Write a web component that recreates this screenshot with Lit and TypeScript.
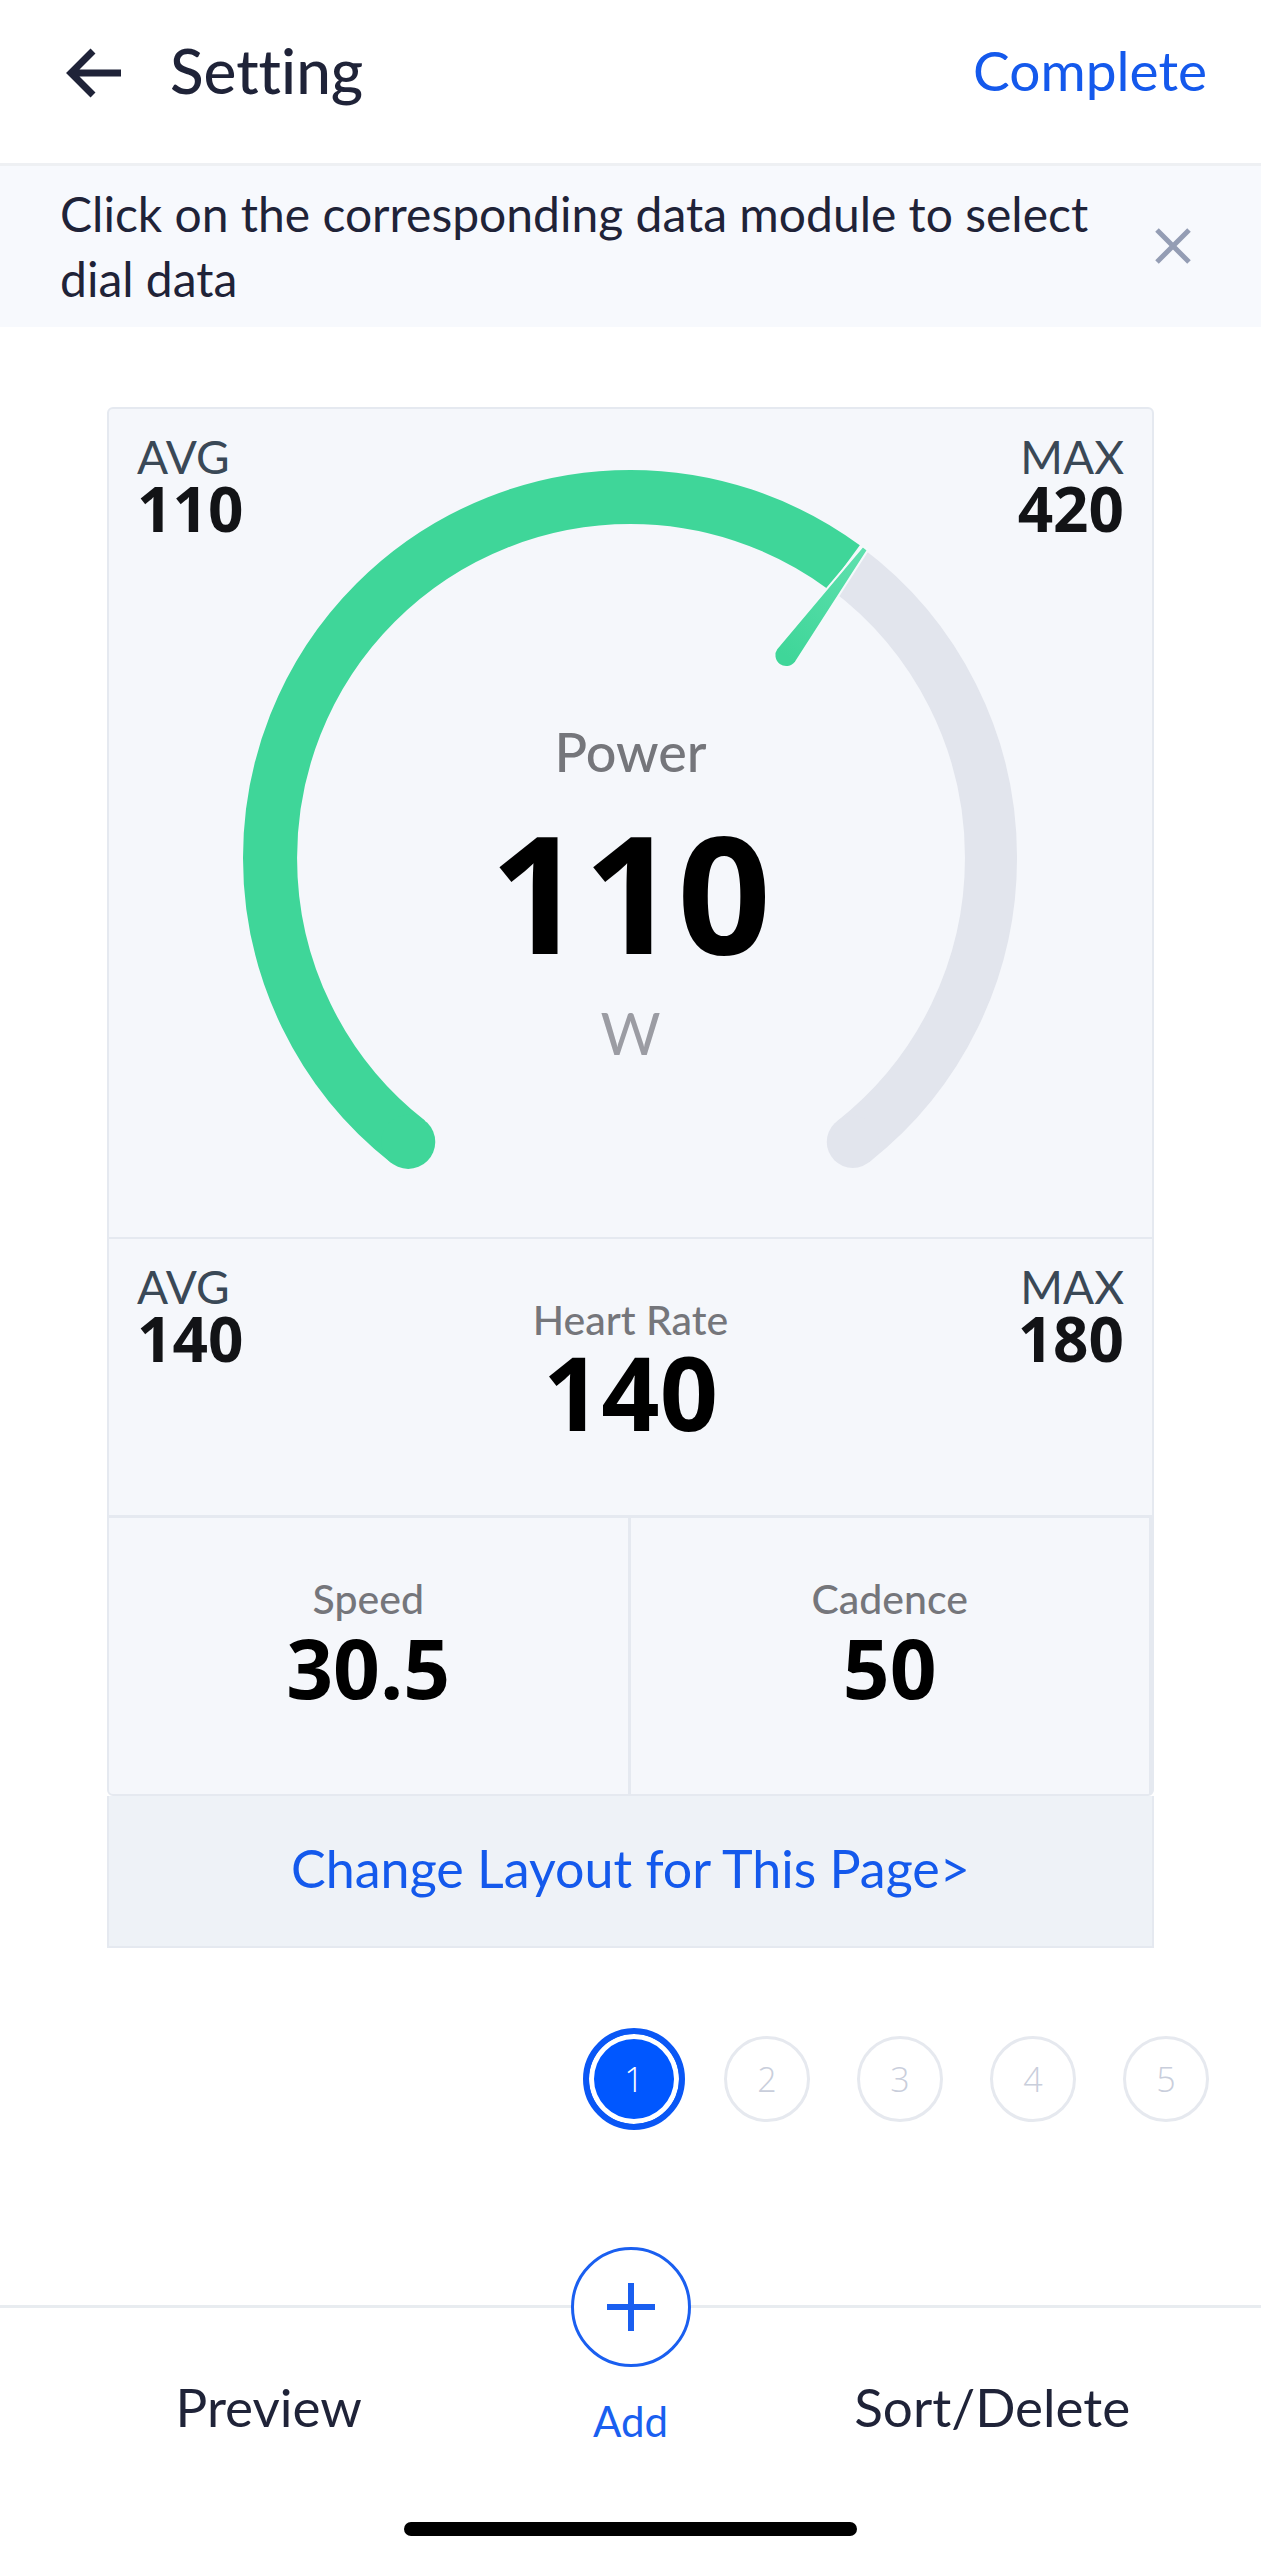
import { LitElement, css, html } from "lit";
import { customElement, property, state } from "lit/decorators.js";
import { classMap } from "lit/directives/class-map.js";

@customElement("corner-stat")
export class CornerStat extends LitElement {
  @property({ type: String })
  label = "";

  @property({ type: String })
  value = "";

  render() {
    return html`
      <span class="label">${this.label}</span>
      <span class="value">${this.value}</span>
    `;
  }

  static styles = css`
    :host {
      display: flex;
      flex-direction: column;
    }

    .label {
      color: #3a4856;
      font-size: 46px;
      line-height: 50px;
    }

    .value {
      color: #121316;
      font-family: "Open Sans", "Noto Sans", sans-serif;
      font-size: 62px;
      font-weight: 700;
      line-height: 52px;
    }
  `;
}

@customElement("dial-gauge")
export class DialGauge extends LitElement {
  render() {
    return html`
      <svg class="dial" viewBox="0 0 776 702" aria-hidden="true">
        <defs>
          <linearGradient
            id="needle"
            gradientUnits="userSpaceOnUse"
            x1="543"
            y1="187"
            x2="622"
            y2="79"
          >
            <stop offset="0" stop-color="#3fd699" />
            <stop offset="1" stop-color="#5fe0ae" />
          </linearGradient>
        </defs>
        <path
          d="M 603 99 A 360 360 0 0 1 748 388 A 360 360 0 0 1 610 672"
          fill="none"
          stroke="#e2e5ed"
          stroke-width="52"
        />
        <circle cx="610" cy="672" r="26" fill="#e2e5ed" />
        <path
          d="M 166 672 A 360 360 0 0 1 28 388 A 360 360 0 0 1 388 28 A 360 360 0 0 1 601 98"
          fill="none"
          stroke="#3fd699"
          stroke-width="54"
        />
        <circle cx="166" cy="672" r="27" fill="#3fd699" />
        <path
          d="M 620 77 L 625 81 L 553 193 A 11 11 0 1 1 534 179 Z"
          fill="url(#needle)"
          stroke="#f5f9fb"
          stroke-width="2"
          stroke-linejoin="round"
        />
      </svg>
    `;
  }

  static styles = css`
    :host {
      display: block;
    }

    .dial {
      display: block;
      width: 100%;
      overflow: visible;
    }
  `;
}

@customElement("app-root")
export class AppRoot extends LitElement {
  @state()
  page = 1;

  @state()
  hintOpen = true;

  pages = [1, 2, 3, 4, 5];

  closeHint() {
    this.hintOpen = false;
  }

  renderHint() {
    return html`
      <div class="hint">
        <p class="hint-text">
          Click on the corresponding data module to select dial data
        </p>
        <button class="close" aria-label="Close" @click=${this.closeHint}>
          <svg class="close-icon" viewBox="0 0 36 36">
            <path
              d="M2 2 L34 34 M34 2 L2 34"
              fill="none"
              stroke="#949db4"
              stroke-width="5"
            />
          </svg>
        </button>
      </div>
    `;
  }

  render() {
    return html`
      <header class="header">
        <button class="back" aria-label="Back">
          <svg class="back-icon" viewBox="0 0 56 64">
            <path
              d="M27 13 L5 35 L27 57 M5 35 H55"
              fill="none"
              stroke="#1f2338"
              stroke-width="7"
            />
          </svg>
        </button>
        <h1 class="title">Setting</h1>
        <button class="complete">Complete</button>
      </header>

      ${this.hintOpen ? this.renderHint() : ""}

      <main class="main">
        <section class="card">
          <button class="module power">
            <dial-gauge class="gauge"></dial-gauge>
            <span class="readout">
              <span class="power-name">Power</span>
              <span class="power-value">110</span>
              <span class="power-unit">W</span>
            </span>
            <corner-stat class="avg" label="AVG" value="110"></corner-stat>
            <corner-stat class="max" label="MAX" value="420"></corner-stat>
          </button>
          <button class="module heart">
            <span class="metric">
              <span class="name">Heart Rate</span>
              <span class="value large">140</span>
            </span>
            <corner-stat class="avg" label="AVG" value="140"></corner-stat>
            <corner-stat class="max" label="MAX" value="180"></corner-stat>
          </button>
          <div class="split">
            <button class="module small">
              <span class="metric">
                <span class="name">Speed</span>
                <span class="value">30.5</span>
              </span>
            </button>
            <button class="module small">
              <span class="metric">
                <span class="name">Cadence</span>
                <span class="value">50</span>
              </span>
            </button>
          </div>
        </section>
        <button class="change">Change Layout for This Page&gt;</button>
      </main>

      <nav class="pager" aria-label="Pages">
        ${this.pages.map(
          (n) => html`
            <button
              class=${classMap({ dot: true, active: n === this.page })}
              @click=${() => (this.page = n)}
            >
              ${n}
            </button>
          `
        )}
      </nav>

      <footer class="footer">
        <button class="action">Preview</button>
        <button class="add">
          <span class="add-circle">
            <svg class="add-icon" viewBox="0 0 48 48">
              <path
                d="M24 0 V48 M0 24 H48"
                fill="none"
                stroke="#1a5ff0"
                stroke-width="6"
              />
            </svg>
          </span>
          <span class="add-label">Add</span>
        </button>
        <button class="action">Sort/Delete</button>
      </footer>
      <div class="home-bar"></div>
    `;
  }

  static styles = css`
    :host {
      display: flex;
      flex-direction: column;
      background: #fff;
      color: #1f2338;
      font-family: Lato, "Open Sans", sans-serif;
      font-variant-ligatures: none;
    }

    * {
      box-sizing: border-box;
    }

    button {
      margin: 0;
      padding: 0;
      border: none;
      background: none;
      color: inherit;
      font: inherit;
      font-variant-ligatures: none;
      cursor: pointer;
    }

    .header {
      display: flex;
      align-items: center;
      padding: 38px 54px 61px 66px;
      border-bottom: 3px solid #eef0f3;
    }

    .back-icon {
      display: block;
      width: 56px;
      height: 64px;
    }

    .title {
      flex: 1;
      margin: 0 0 0 48px;
      font-size: 62px;
      font-weight: 500;
      line-height: 64px;
    }

    .complete {
      color: #1459ec;
      font-size: 55px;
      line-height: 64px;
    }

    .hint {
      display: flex;
      align-items: center;
      justify-content: space-between;
      padding: 15px 70px 16px 60px;
      background: #f7f9fd;
    }

    .hint-text {
      flex: 1;
      margin: 0 50px 0 0;
      font-size: 48px;
      line-height: 65px;
    }

    .close-icon {
      display: block;
      width: 36px;
      height: 36px;
    }

    .main {
      display: flex;
      flex-direction: column;
      padding: 80px 107px;
    }

    .card {
      display: flex;
      flex-direction: column;
      border: 2px solid #e5e9f0;
      border-radius: 6px;
      background: #f5f7fb;
    }

    .module {
      display: grid;
      justify-items: center;
      align-items: start;
    }

    .module > * {
      grid-area: 1 / 1;
    }

    .avg,
    .max {
      margin: 23px 28px;
    }

    .avg {
      justify-self: start;
      text-align: left;
    }

    .max {
      justify-self: end;
      text-align: right;
    }

    .power {
      border-bottom: 2px solid #e5e9f0;
    }

    .gauge {
      width: 74.5%;
      margin: 60px 0 65px;
    }

    .readout {
      display: flex;
      flex-direction: column;
      align-items: center;
      gap: 29px;
      margin-top: 313px;
    }

    .power-name {
      color: #75767b;
      font-size: 54px;
      font-weight: 500;
      line-height: 60px;
    }

    .power-value {
      color: #000;
      font-family: "Open Sans", "Noto Sans", sans-serif;
      font-size: 164px;
      font-weight: 700;
      line-height: 160px;
    }

    .power-unit {
      color: #9b9ca3;
      font-size: 58px;
      line-height: 66px;
    }

    .heart {
      border-bottom: 3px solid #e5e9f0;
    }

    .metric {
      display: flex;
      flex-direction: column;
      align-items: center;
      padding: 57px 0 75px;
    }

    .name {
      color: #75767b;
      font-size: 41px;
      font-weight: 500;
      line-height: 48px;
    }

    .value {
      margin-top: 4px;
      color: #000;
      font-family: "Open Sans", "Noto Sans", sans-serif;
      font-size: 82px;
      font-weight: 700;
      line-height: 80px;
    }

    .value.large {
      margin-top: 0;
      font-size: 102px;
      line-height: 96px;
    }

    .split {
      display: grid;
      grid-template-columns: 1fr 1fr;
    }

    .small {
      padding-bottom: 12px;
      border-right: 3px solid #e5e9f0;
    }

    .change {
      padding: 42px 0 48px;
      border: 2px solid #e5e9f0;
      border-top: none;
      background: #eef2f7;
      color: #1459ec;
      font-size: 52px;
      line-height: 60px;
    }

    .pager {
      display: flex;
      align-items: center;
      justify-content: flex-end;
      gap: 47px;
      padding: 0 52px;
    }

    .dot {
      width: 86px;
      height: 86px;
      border: 3px solid #e6e9ef;
      border-radius: 50%;
      color: #c9cedb;
      font-family: "Open Sans", "Noto Sans", sans-serif;
      font-size: 34px;
      font-weight: 300;
      line-height: 40px;
    }

    .dot.active {
      width: 102px;
      height: 102px;
      margin-right: -8px;
      border: 6px solid #0a57f5;
      box-shadow: inset 0 0 0 5px #fff;
      background: #0057ff;
      color: #fff;
    }

    .footer {
      display: grid;
      grid-template-columns: 1fr 186px 1fr;
      align-items: start;
      margin-top: 175px;
      border-top: 3px solid #e8ecf0;
    }

    .action {
      padding-top: 69px;
      font-size: 53px;
      line-height: 60px;
    }

    .add {
      display: flex;
      flex-direction: column;
      align-items: center;
      gap: 30px;
      margin-top: -61px;
      color: #1a5ff0;
    }

    .add-circle {
      display: flex;
      align-items: center;
      justify-content: center;
      width: 120px;
      height: 120px;
      border: 3px solid #1a5ff0;
      border-radius: 50%;
      background: #fff;
    }

    .add-icon {
      width: 48px;
      height: 48px;
    }

    .add-label {
      font-size: 42px;
      line-height: 48px;
    }

    .home-bar {
      align-self: center;
      width: 36%;
      height: 14px;
      margin: 77px 0 24px;
      border-radius: 7px;
      background: #000;
    }
  `;
}

declare global {
  interface HTMLElementTagNameMap {
    "corner-stat": CornerStat;
    "dial-gauge": DialGauge;
    "app-root": AppRoot;
  }
}
